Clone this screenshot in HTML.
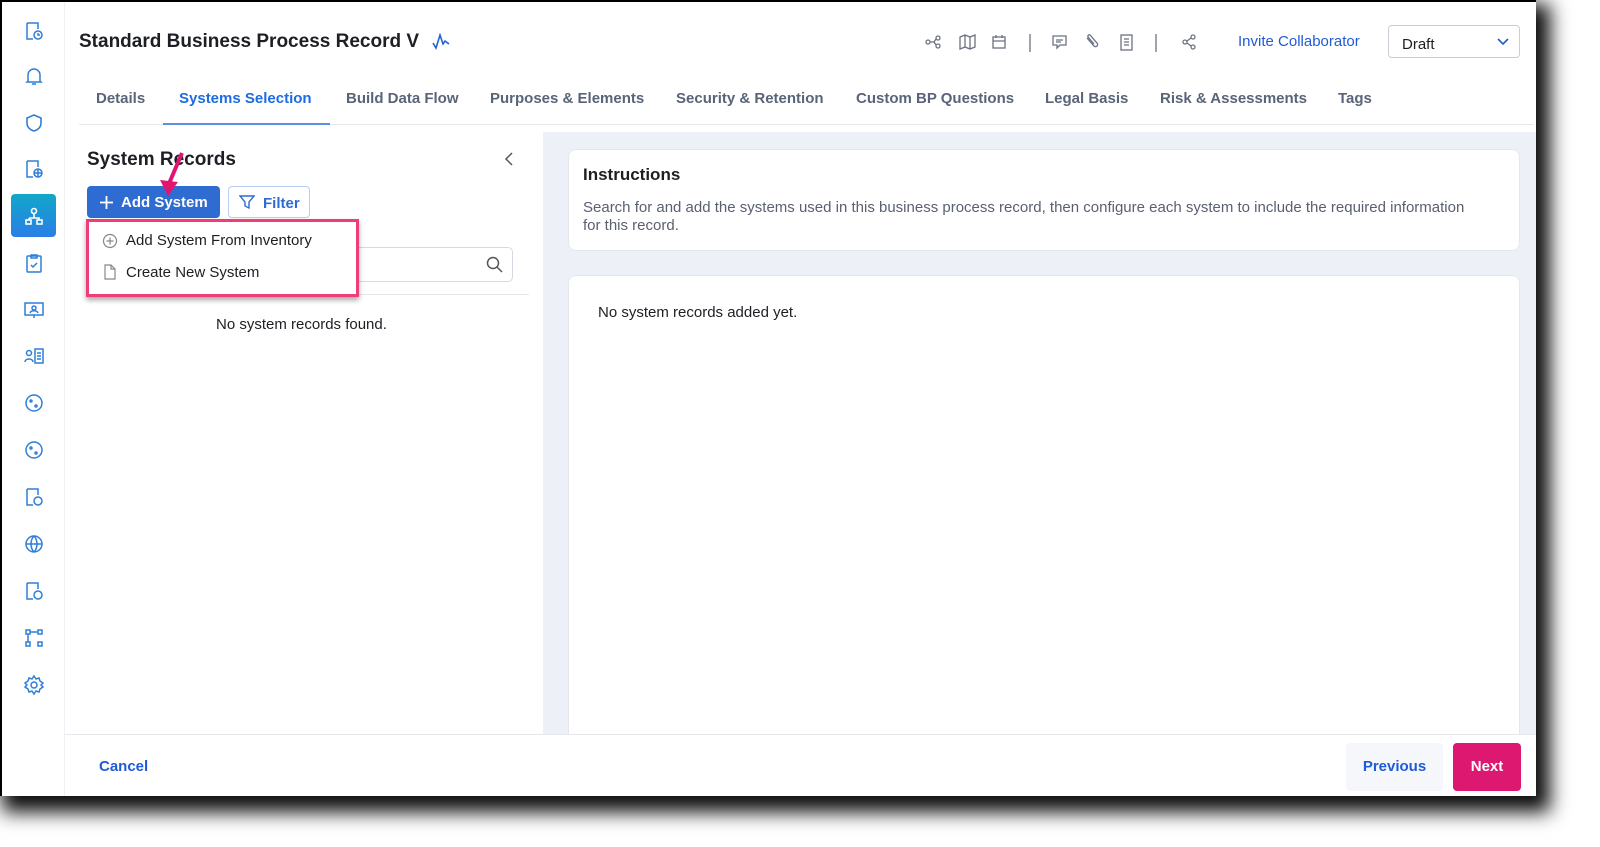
<!DOCTYPE html>
<html><head><meta charset="utf-8"><style>
*{box-sizing:border-box;margin:0;padding:0}
body{width:1600px;height:847px;background:#fff;font-family:"Liberation Sans",sans-serif;position:relative;overflow:hidden}
.frame{position:absolute;left:0;top:0;width:1536px;height:796px;background:#fff;border-top:2px solid #000;border-left:2px solid #000;box-shadow:8px 10px 18px 6px rgba(0,0,0,.95)}
.side{position:absolute;left:0;top:0;width:63px;height:794px;background:#fff;border-right:1px solid #eef0f3}
.side svg{position:absolute;left:21px}
.act{position:absolute;left:9px;top:192px;width:45px;height:43px;border-radius:4px;background:linear-gradient(#12a7c9,#2a7ee6)}
.abs{position:absolute}
.title{left:77px;top:29px;font-size:19px;font-weight:bold;color:#1d1f24}
.tabs{left:77px;top:88px;font-size:15px;font-weight:bold;color:#5a6478}
.tabs span{position:absolute;top:0;white-space:nowrap}
.main{position:absolute;left:63px;top:130px;width:1471px;height:602px;background:#edf1f7}
.left{position:absolute;left:63px;top:130px;width:478px;height:602px;background:#fff}
.card{position:absolute;background:#fff;border:1px solid #e3e8ef;border-radius:8px}
.foot{position:absolute;left:63px;top:732px;width:1471px;height:62px;background:#fff;border-top:1px solid #e5e8ed}
</style></head><body>
<div class="frame">
<div class="side">
<div class="act"></div>
<svg width="22" height="22" style="top:18px" viewBox="0 0 22 22" fill="none" stroke="#2f7ed8" stroke-width="1.5"><path d="M4 3h11v6M4 3v16h6"/><circle cx="15" cy="15" r="4"/><path d="M15 13v2h2"/></svg>
<svg width="22" height="22" style="top:63px" viewBox="0 0 22 22" fill="none" stroke="#2f7ed8" stroke-width="1.5"><path d="M5 16V10a6 6 0 0112 0v6l1 1H4zM9 19h4"/></svg>
<svg width="22" height="22" style="top:110px" viewBox="0 0 22 22" fill="none" stroke="#2f7ed8" stroke-width="1.6"><path d="M11 3l7 3v5c0 4-3 7-7 8-4-1-7-4-7-8V6z"/></svg>
<svg width="22" height="22" style="top:156px" viewBox="0 0 22 22" fill="none" stroke="#2f7ed8" stroke-width="1.5"><path d="M4 3h11v6M4 3v16h6"/><circle cx="15" cy="15" r="4"/><path d="M11 15h8M15 11v8"/></svg>
<svg width="22" height="22" style="top:203px" viewBox="0 0 22 22" fill="none" stroke="#fff" stroke-width="1.6"><circle cx="11" cy="6" r="2.5"/><path d="M11 9v4M6 13h10v2M6 13v2"/><rect x="3" y="15" width="5" height="4"/><rect x="14" y="15" width="5" height="4"/></svg>
<svg width="22" height="22" style="top:250px" viewBox="0 0 22 22" fill="none" stroke="#2f7ed8" stroke-width="1.5"><rect x="4" y="4" width="14" height="16" rx="1"/><path d="M8 3h6v3H8zM8 13l2 2 4-4"/></svg>
<svg width="22" height="22" style="top:296px" viewBox="0 0 22 22" fill="none" stroke="#2f7ed8" stroke-width="1.5"><rect x="2" y="5" width="18" height="12"/><circle cx="11" cy="10" r="2"/><path d="M7 15c1-3 7-3 8 0M11 17v3"/></svg>
<svg width="22" height="22" style="top:343px" viewBox="0 0 22 22" fill="none" stroke="#2f7ed8" stroke-width="1.5"><circle cx="6" cy="8" r="2.5"/><path d="M2 17c0-4 8-4 8 0"/><rect x="12" y="4" width="8" height="14"/><path d="M14 8h4M14 11h4M14 14h4"/></svg>
<svg width="22" height="22" style="top:390px" viewBox="0 0 22 22" fill="none" stroke="#2f7ed8" stroke-width="1.5"><circle cx="11" cy="11" r="8"/><circle cx="8" cy="9" r="1"/><circle cx="13" cy="14" r="1"/></svg>
<svg width="22" height="22" style="top:437px" viewBox="0 0 22 22" fill="none" stroke="#2f7ed8" stroke-width="1.5"><circle cx="11" cy="11" r="8"/><circle cx="8" cy="9" r="1"/><circle cx="13" cy="14" r="1"/></svg>
<svg width="22" height="22" style="top:484px" viewBox="0 0 22 22" fill="none" stroke="#2f7ed8" stroke-width="1.5"><path d="M4 3h11v6M4 3v16h6"/><circle cx="15" cy="15" r="4"/></svg>
<svg width="22" height="22" style="top:531px" viewBox="0 0 22 22" fill="none" stroke="#2f7ed8" stroke-width="1.5"><circle cx="11" cy="11" r="8"/><path d="M3 11h16M11 3c-4 4-4 12 0 16M11 3c4 4 4 12 0 16"/></svg>
<svg width="22" height="22" style="top:578px" viewBox="0 0 22 22" fill="none" stroke="#2f7ed8" stroke-width="1.5"><path d="M4 3h11v6M4 3v16h6"/><circle cx="15" cy="15" r="4"/></svg>
<svg width="22" height="22" style="top:625px" viewBox="0 0 22 22" fill="none" stroke="#2f7ed8" stroke-width="1.5"><rect x="3" y="3" width="4" height="4"/><rect x="15" y="15" width="4" height="4"/><rect x="15" y="3" width="4" height="4"/><rect x="3" y="15" width="4" height="4"/><path d="M7 5h8M5 7v8"/></svg>
<svg width="22" height="22" style="top:672px" viewBox="0 0 22 22" fill="none" stroke="#2f7ed8" stroke-width="1.5"><circle cx="11" cy="11" r="3"/><path d="M11 2l2 3 3-1 1 3 3 2-2 2 2 2-3 2-1 3-3-1-2 3-2-3-3 1-1-3-3-2 2-2-2-2 3-2 1-3 3 1z"/></svg>
</div>
<div class="abs title">Standard Business Process Record V</div>
<svg class="abs" style="left:430px;top:31px" width="20" height="18" viewBox="0 0 20 18" fill="none" stroke="#2461d8" stroke-width="1.6"><path d="M1 10l3 5 4-13 3 9 2-3 4 3"/></svg>
<svg class="abs" style="left:920px;top:30px" width="290" height="20" viewBox="0 0 290 20" fill="none" stroke="#6b7280" stroke-width="1.3">
<circle cx="6" cy="10" r="2"/><circle cx="16" cy="6" r="2"/><circle cx="16" cy="14" r="2"/><path d="M8 10h4l2-3M12 10l2 3"/>
<path d="M38 5l5-2 5 2 5-2v12l-5 2-5-2-5 2zM43 3v12M48 5v12"/>
<rect x="71" y="5" width="12" height="11"/><path d="M71 9h12M74 3v3M80 3v3"/>
<line x1="108" y1="2" x2="108" y2="20"/>
<path d="M131 4h13v9h-6l-3 3v-3h-4zM134 8h7M134 10h5"/>
<path d="M165 6l7 8a2 2 0 003-3l-7-8a1.5 1.5 0 00-2 2l6 7"/>
<rect x="199" y="3" width="11" height="15"/><path d="M202 7h5M202 10h5M202 13h5"/>
<line x1="234" y1="2" x2="234" y2="20"/>
<circle cx="263" cy="10" r="2"/><circle cx="271" cy="5" r="2"/><circle cx="271" cy="15" r="2"/><path d="M265 9l4-3M265 11l4 3"/>
<line x1="298" y1="2" x2="298" y2="20"/>
</svg>
<div class="abs" style="left:1236px;top:31px;font-size:15px;color:#1f5bd6">Invite Collaborator</div>
<div class="abs" style="left:1386px;top:23px;width:132px;height:33px;border:1px solid #c9ced6;border-radius:4px;font-size:15px;color:#1d1f24;padding:10px 0 0 13px">Draft
<svg class="abs" style="right:9px;top:11px" width="14" height="10" viewBox="0 0 14 10" fill="none" stroke="#1f5bd6" stroke-width="1.6"><path d="M2 2l5 5 5-5"/></svg></div>
<div class="abs tabs"><span style="left:17px">Details</span><span style="left:100px;color:#1f6be0">Systems Selection</span><span style="left:267px">Build Data Flow</span><span style="left:411px">Purposes &amp; Elements</span><span style="left:597px">Security &amp; Retention</span><span style="left:777px">Custom BP Questions</span><span style="left:966px">Legal Basis</span><span style="left:1081px">Risk &amp; Assessments</span><span style="left:1259px">Tags</span></div>
<div class="abs" style="left:77px;top:122px;width:1455px;height:1px;background:#e5e8ed"></div>
<div class="abs" style="left:161px;top:121px;width:167px;height:2px;background:#5a8fe6"></div>
<div class="main"></div>
<div class="left"></div>
<div class="abs" style="left:85px;top:147px;font-size:19px;font-weight:bold;color:#1d1f24">System Records</div>
<svg class="abs" style="left:501px;top:149px" width="12" height="16" viewBox="0 0 12 16" fill="none" stroke="#555" stroke-width="1.5"><path d="M9 2L3 8l6 6"/></svg>
<div class="abs" style="left:85px;top:184px;width:133px;height:32px;background:#2f6cd1;border-radius:4px;color:#fff;font-size:15px;font-weight:bold;padding:8px 0 0 34px">Add System</div>
<svg class="abs" style="left:97px;top:193px" width="15" height="15" viewBox="0 0 15 15" stroke="#fff" stroke-width="1.8"><path d="M7.5 1v13M1 7.5h13"/></svg>
<div class="abs" style="left:226px;top:184px;width:82px;height:32px;border:1px solid #b9cdf0;border-radius:4px;color:#2f6cd1;font-size:15px;font-weight:bold;padding:8px 0 0 34px">Filter</div>
<svg class="abs" style="left:237px;top:192px" width="16" height="16" viewBox="0 0 16 16" fill="none" stroke="#2f6cd1" stroke-width="1.4"><path d="M1 2h14l-5 6v6l-4-2V8z"/></svg>
<div class="abs" style="left:300px;top:245px;width:211px;height:35px;border:1px solid #d5dae2;border-radius:5px"></div>
<svg class="abs" style="left:484px;top:254px" width="17" height="17" viewBox="0 0 17 17" fill="none" stroke="#555" stroke-width="1.5"><circle cx="7" cy="7" r="5.5"/><path d="M11 11l5 5"/></svg>
<div class="abs" style="left:85px;top:292px;width:442px;height:1px;background:#e5e8ed"></div>
<div class="abs" style="left:84px;top:217px;width:273px;height:78px;background:#fff;border:3px solid #ef3d7a;box-shadow:0 3px 5px rgba(0,0,0,.35)"></div>
<svg class="abs" style="left:100px;top:231px" width="16" height="16" viewBox="0 0 16 16" fill="none" stroke="#888" stroke-width="1.2"><circle cx="8" cy="8" r="6.5"/><path d="M8 4.5v7M4.5 8h7"/></svg>
<div class="abs" style="left:124px;top:230px;font-size:15px;color:#1d1f24">Add System From Inventory</div>
<svg class="abs" style="left:101px;top:262px" width="14" height="16" viewBox="0 0 14 16" fill="none" stroke="#888" stroke-width="1.2"><path d="M2 1h6l4 4v10H2zM8 1v4h4"/></svg>
<div class="abs" style="left:124px;top:262px;font-size:15px;color:#1d1f24">Create New System</div>
<svg class="abs" style="left:150px;top:148px" width="40" height="50" viewBox="0 0 40 50"><path d="M30 3L16 36" stroke="#e0156f" stroke-width="4" fill="none"/><path d="M8 30l8 16 10-14z" fill="#e0156f"/></svg>
<div class="abs" style="left:214px;top:314px;font-size:15px;color:#1d1f24">No system records found.</div>
<div class="card" style="left:566px;top:147px;width:952px;height:102px"></div>
<div class="abs" style="left:581px;top:163px;font-size:17px;font-weight:bold;color:#1d1f24">Instructions</div>
<div class="abs" style="left:581px;top:197px;width:900px;font-size:15px;line-height:18px;color:#5a6070">Search for and add the systems used in this business process record, then configure each system to include the required information for this record.</div>
<div class="card" style="left:566px;top:273px;width:952px;height:470px;border-bottom:none;border-radius:8px 8px 0 0"></div>
<div class="abs" style="left:596px;top:302px;font-size:15px;color:#1d1f24">No system records added yet.</div>
<div class="foot"></div>
<div class="abs" style="left:97px;top:756px;font-size:15px;font-weight:bold;color:#1f5bd6">Cancel</div>
<div class="abs" style="left:1344px;top:741px;width:97px;height:48px;background:#f5f7fb;border-radius:4px;font-size:15px;font-weight:bold;color:#1f5bd6;text-align:center;line-height:48px">Previous</div>
<div class="abs" style="left:1451px;top:741px;width:68px;height:48px;background:#dd1870;border-radius:4px;font-size:15px;font-weight:bold;color:#fff;text-align:center;line-height:48px">Next</div>
</div>
</body></html>
